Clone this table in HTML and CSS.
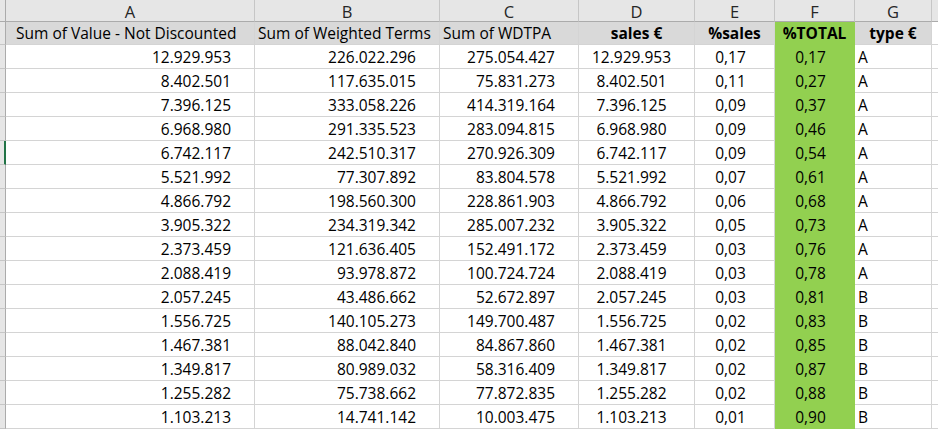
FILE: index.html
```html
<!DOCTYPE html>
<html>
<head>
<meta charset="utf-8">
<link rel="stylesheet" href="styles.css">
</head>
<body>
<div class="sheet">
  <div class="corner"></div>
  <div class="colh">A</div><div class="colh">B</div><div class="colh">C</div><div class="colh">D</div><div class="colh">E</div><div class="colh">F</div><div class="colh">G</div><div class="colh last"></div>

  <div class="rowh"></div><div class="c hd hfirst">Sum of Value - Not Discounted</div><div class="c hd hleft">Sum of Weighted Terms</div><div class="c hd hleft">Sum of WDTPA</div><div class="c hd b center">sales €</div><div class="c hd b center">%sales</div><div class="c hd b center green">%TOTAL</div><div class="c hd b center">type €</div><div class="c extra"></div>

  <div class="rowh"></div><div class="c num">12.929.953</div><div class="c num">226.022.296</div><div class="c num">275.054.427</div><div class="c mid">12.929.953</div><div class="c pct">0,17</div><div class="c pct green">0,17</div><div class="c left">A</div><div class="c extra"></div>
  <div class="rowh"></div><div class="c num">8.402.501</div><div class="c num">117.635.015</div><div class="c num">75.831.273</div><div class="c mid">8.402.501</div><div class="c pct">0,11</div><div class="c pct green">0,27</div><div class="c left">A</div><div class="c extra"></div>
  <div class="rowh"></div><div class="c num">7.396.125</div><div class="c num">333.058.226</div><div class="c num">414.319.164</div><div class="c mid">7.396.125</div><div class="c pct">0,09</div><div class="c pct green">0,37</div><div class="c left">A</div><div class="c extra"></div>
  <div class="rowh"></div><div class="c num">6.968.980</div><div class="c num">291.335.523</div><div class="c num">283.094.815</div><div class="c mid">6.968.980</div><div class="c pct">0,09</div><div class="c pct green">0,46</div><div class="c left">A</div><div class="c extra"></div>
  <div class="rowh active"></div><div class="c num">6.742.117</div><div class="c num">242.510.317</div><div class="c num">270.926.309</div><div class="c mid">6.742.117</div><div class="c pct">0,09</div><div class="c pct green">0,54</div><div class="c left">A</div><div class="c extra"></div>
  <div class="rowh"></div><div class="c num">5.521.992</div><div class="c num">77.307.892</div><div class="c num">83.804.578</div><div class="c mid">5.521.992</div><div class="c pct">0,07</div><div class="c pct green">0,61</div><div class="c left">A</div><div class="c extra"></div>
  <div class="rowh"></div><div class="c num">4.866.792</div><div class="c num">198.560.300</div><div class="c num">228.861.903</div><div class="c mid">4.866.792</div><div class="c pct">0,06</div><div class="c pct green">0,68</div><div class="c left">A</div><div class="c extra"></div>
  <div class="rowh"></div><div class="c num">3.905.322</div><div class="c num">234.319.342</div><div class="c num">285.007.232</div><div class="c mid">3.905.322</div><div class="c pct">0,05</div><div class="c pct green">0,73</div><div class="c left">A</div><div class="c extra"></div>
  <div class="rowh"></div><div class="c num">2.373.459</div><div class="c num">121.636.405</div><div class="c num">152.491.172</div><div class="c mid">2.373.459</div><div class="c pct">0,03</div><div class="c pct green">0,76</div><div class="c left">A</div><div class="c extra"></div>
  <div class="rowh"></div><div class="c num">2.088.419</div><div class="c num">93.978.872</div><div class="c num">100.724.724</div><div class="c mid">2.088.419</div><div class="c pct">0,03</div><div class="c pct green">0,78</div><div class="c left">A</div><div class="c extra"></div>
  <div class="rowh"></div><div class="c num">2.057.245</div><div class="c num">43.486.662</div><div class="c num">52.672.897</div><div class="c mid">2.057.245</div><div class="c pct">0,03</div><div class="c pct green">0,81</div><div class="c left">B</div><div class="c extra"></div>
  <div class="rowh"></div><div class="c num">1.556.725</div><div class="c num">140.105.273</div><div class="c num">149.700.487</div><div class="c mid">1.556.725</div><div class="c pct">0,02</div><div class="c pct green">0,83</div><div class="c left">B</div><div class="c extra"></div>
  <div class="rowh"></div><div class="c num">1.467.381</div><div class="c num">88.042.840</div><div class="c num">84.867.860</div><div class="c mid">1.467.381</div><div class="c pct">0,02</div><div class="c pct green">0,85</div><div class="c left">B</div><div class="c extra"></div>
  <div class="rowh"></div><div class="c num">1.349.817</div><div class="c num">80.989.032</div><div class="c num">58.316.409</div><div class="c mid">1.349.817</div><div class="c pct">0,02</div><div class="c pct green">0,87</div><div class="c left">B</div><div class="c extra"></div>
  <div class="rowh"></div><div class="c num">1.255.282</div><div class="c num">75.738.662</div><div class="c num">77.872.835</div><div class="c mid">1.255.282</div><div class="c pct">0,02</div><div class="c pct green">0,88</div><div class="c left">B</div><div class="c extra"></div>
  <div class="rowh"></div><div class="c num">1.103.213</div><div class="c num">14.741.142</div><div class="c num">10.003.475</div><div class="c mid">1.103.213</div><div class="c pct">0,01</div><div class="c pct green">0,90</div><div class="c left">B</div><div class="c extra"></div>
</div>
</body>
</html>
```
FILE: styles.css
```css
html, body {
  margin: 0;
  padding: 0;
  background: #ffffff;
}
body {
  font-family: "Open Sans", Lato, sans-serif;
  color: #000;
  overflow: hidden;
}
.sheet {
  display: grid;
  grid-template-columns: 6px 249px 185px 139px 116px 80px 80px 77px 6px;
  grid-template-rows: 22px 23px repeat(16, 24px);
  width: 938px;
}
.corner {
  background: #e6e6e6;
  border-right: 1px solid #ababab;
  border-bottom: 1px solid #ababab;
  box-sizing: border-box;
}
.colh {
  background: #e6e6e6;
  border-right: 1px solid #c6c6c6;
  border-bottom: 1px solid #ababab;
  box-sizing: border-box;
  display: flex;
  align-items: center;
  justify-content: center;
  font-size: 16.5px;
  color: #262626;
  padding-top: 1px;
}
.colh.last {
  border-right: none;
}
.rowh {
  background: #e6e6e6;
  border-right: 1px solid #ababab;
  border-bottom: 1px solid #c6c6c6;
  box-sizing: border-box;
}
.rowh.active {
  border-right: 2px solid #217346;
}
.c {
  box-sizing: border-box;
  border-right: 1px solid #d4d4d4;
  border-bottom: 1px solid #d4d4d4;
  font-size: 15.5px;
  line-height: 20px;
  display: flex;
  align-items: flex-end;
  padding-bottom: 1px;
  white-space: nowrap;
  overflow: hidden;
}
.hd {
  background: #d9d9d9;
}
.b {
  font-weight: bold;
}
.left {
  justify-content: flex-start;
  padding-left: 3px;
}
.hfirst {
  padding-left: 10px;
}
.hleft {
  padding-left: 3px;
}
.center {
  justify-content: center;
}
.pct {
  justify-content: center;
  padding-right: 8px;
}
.num {
  justify-content: flex-end;
  padding-right: 23px;
}
.mid {
  justify-content: center;
  padding-right: 10px;
}
.green {
  background: #92d050;
  border-bottom-color: #92d050;
  border-right-color: #92d050;
}
.extra {
  border-right: none;
}
```
